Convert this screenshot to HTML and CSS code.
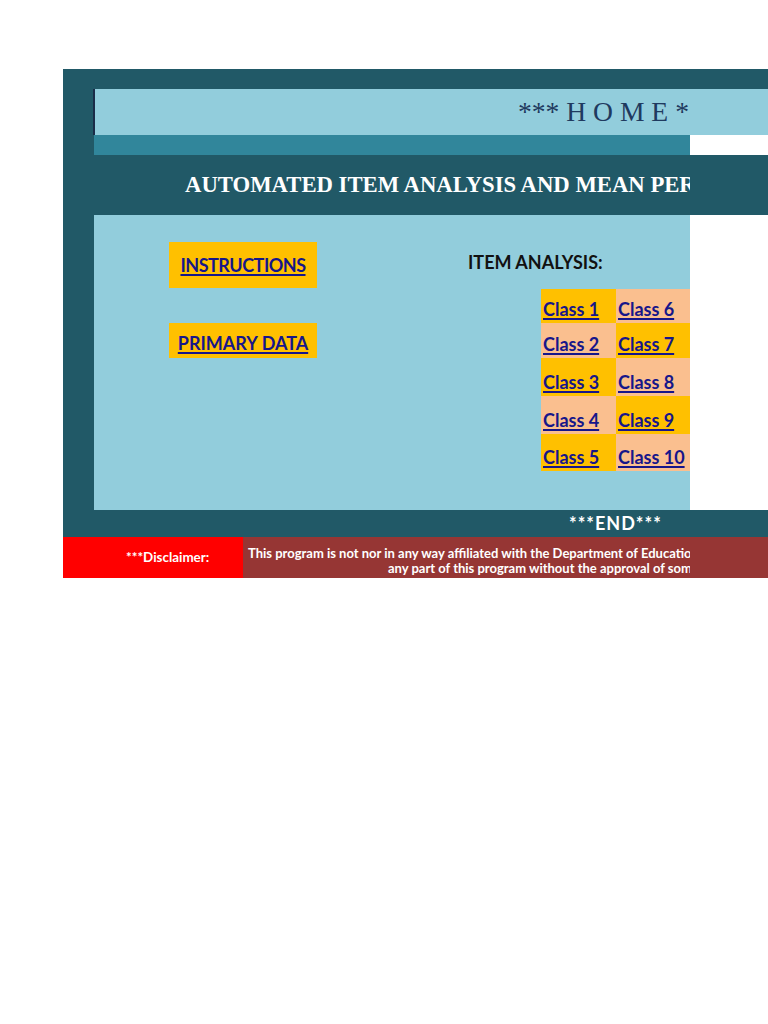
FILE: index.html
```html
<!DOCTYPE html>
<html lang="en">
<head>
<meta charset="utf-8">
<title>Automated Item Analysis - Home</title>
<link rel="stylesheet" href="styles.css">
</head>
<body>
<div class="sheet">
  <div class="row-top"></div>
  <div class="row-home">
    <div class="home-band">
      <div class="home-clip"><span class="home-text">*** H O M E ***</span></div>
    </div>
  </div>
  <div class="row-bar">
    <div class="bar"></div>
    <div class="blank"></div>
  </div>
  <div class="row-title">
    <div class="title-clip"><h1 class="title">AUTOMATED ITEM ANALYSIS AND MEAN PERCENTAGE SCORE</h1></div>
  </div>
  <div class="row-content">
    <div class="content">
      <div class="col-left">
        <div class="btn btn-instr"><a href="#">INSTRUCTIONS</a></div>
        <div class="btn btn-primary"><a href="#">PRIMARY DATA</a></div>
      </div>
      <div class="col-right">
        <div class="label">ITEM ANALYSIS:</div>
        <div class="class-grid">
          <div class="cell orange"><a href="#">Class 1</a></div>
          <div class="cell peach"><a href="#">Class 6</a></div>
          <div class="cell peach"><a href="#">Class 2</a></div>
          <div class="cell orange"><a href="#">Class 7</a></div>
          <div class="cell orange"><a href="#">Class 3</a></div>
          <div class="cell peach"><a href="#">Class 8</a></div>
          <div class="cell peach"><a href="#">Class 4</a></div>
          <div class="cell orange"><a href="#">Class 9</a></div>
          <div class="cell orange"><a href="#">Class 5</a></div>
          <div class="cell peach"><a href="#">Class 10</a></div>
        </div>
      </div>
    </div>
    <div class="blank"></div>
  </div>
  <div class="row-end"><span class="end-text">***END***</span></div>
  <div class="row-disc">
    <div class="disc-label">***Disclaimer:</div>
    <div class="disc-body">
      <div class="disc-clip">
        <p class="disc-l1">This program is not nor in any way affiliated with the Department of Education. Do not sell or distribute</p>
        <p class="disc-l2">any part of this program without the approval of someone authorized.</p>
      </div>
    </div>
  </div>
</div>
</body>
</html>
```

FILE: styles.css
```css
* { box-sizing: border-box; }
html, body { margin: 0; padding: 0; background: #ffffff; }
body { font-family: Lato, "Liberation Sans", sans-serif; }

.sheet {
  margin: 69px 0 0 63px;
  width: 705px;
  background: #215967;
  overflow: hidden;
}

.row-top { height: 20px; }

.row-home { height: 46px; padding-left: 30px; }
.home-band {
  height: 46px;
  background: #92cddc;
  border-left: 2px solid #1b2c48;
}
.home-clip {
  width: 595px;
  height: 46px;
  overflow: hidden;
  white-space: nowrap;
  padding-left: 423px;
}
.home-text {
  font-family: "Liberation Serif", serif;
  font-size: 27.6px;
  line-height: 46px;
  color: #1f3a5f;
}

.row-bar { height: 20px; display: flex; padding-left: 31px; }
.bar { width: 596px; background: #31869b; }
.blank { flex: 1; background: #ffffff; }

.row-title { height: 60px; }
.title-clip {
  width: 627px;
  height: 60px;
  overflow: hidden;
  white-space: nowrap;
  padding-left: 122px;
}
.title {
  margin: 0;
  font-family: "Liberation Serif", serif;
  font-weight: bold;
  font-size: 22.7px;
  line-height: 60px;
  color: #ffffff;
}

.row-content { height: 295px; display: flex; padding-left: 31px; }
.content {
  width: 596px;
  background: #92cddc;
  display: flex;
}
.col-left { width: 374px; padding: 27px 0 0 75px; }
.btn {
  width: 148px;
  background: #ffc000;
  display: flex;
  justify-content: center;
}
.btn a, .cell a {
  color: #16168a;
  font-weight: bold;
  font-size: 18px;
  text-decoration: underline;
  text-decoration-thickness: 2px;
  text-underline-offset: 2px;
}
.btn-instr { height: 46px; align-items: center; }
.btn-instr a { line-height: 24px; letter-spacing: -0.5px; }
.btn-primary { height: 35px; margin-top: 35px; align-items: flex-end; padding-bottom: 3px; }
.btn-primary a { line-height: 24px; }

.col-right { flex: 1; padding-top: 35px; }
.label {
  height: 24px;
  line-height: 24px;
  font-weight: bold;
  font-size: 18px;
  color: #111111;
}
.class-grid {
  margin: 15px 0 0 73px;
  display: grid;
  grid-template-columns: 75px 74px;
  grid-template-rows: 34px 35px 38px 38px 37px;
}
.cell {
  display: flex;
  align-items: flex-end;
  padding: 0 0 4px 2px;
}
.cell a { line-height: 20px; white-space: nowrap; }
.orange { background: #ffc000; }
.peach { background: #fabf8f; }

.row-end {
  height: 27px;
  padding-left: 506px;
}
.end-text {
  color: #ffffff;
  font-weight: bold;
  font-size: 18px;
  letter-spacing: 1px;
  line-height: 27px;
}

.row-disc { height: 41px; display: flex; }
.disc-label {
  width: 180px;
  background: #ff0000;
  color: #ffffff;
  font-size: 13.4px;
  font-weight: bold;
  line-height: 41px;
  padding-left: 63px;
  white-space: nowrap;
}
.disc-body { flex: 1; background: #963634; }
.disc-clip {
  width: 447px;
  height: 41px;
  overflow: hidden;
  white-space: nowrap;
  padding-top: 9px;
}
.disc-clip p {
  margin: 0;
  color: #ffffff;
  font-size: 13px;
  font-weight: bold;
  line-height: 15px;
}
.disc-l1 { padding-left: 5px; }
.disc-l2 { padding-left: 145px; }
```
